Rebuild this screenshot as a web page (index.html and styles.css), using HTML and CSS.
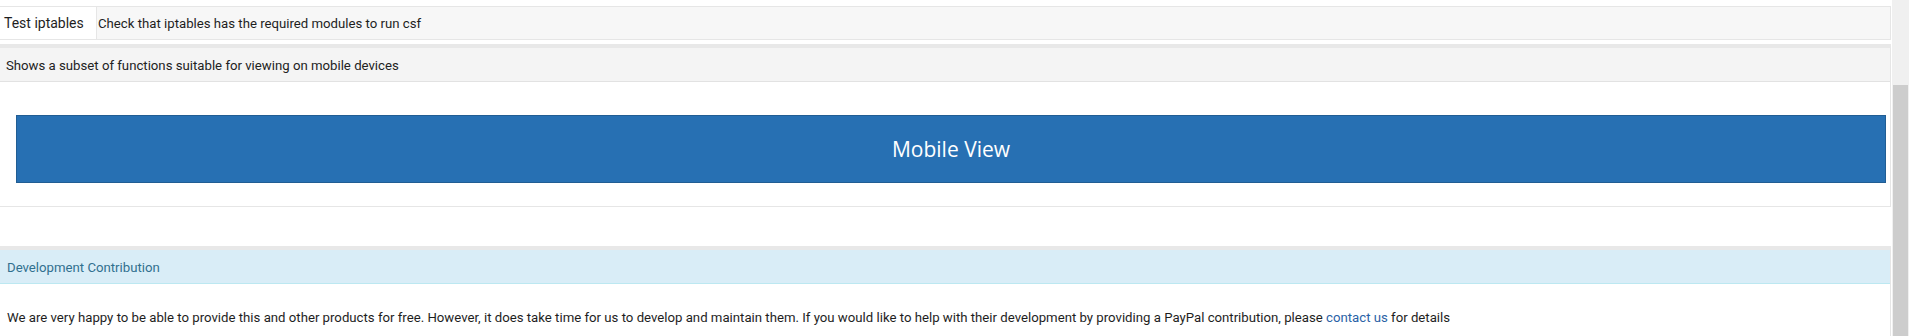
FILE: index.html
```html
<!DOCTYPE html>
<html lang="en">
<head>
<meta charset="utf-8">
<title>csf</title>
<link rel="stylesheet" href="styles.css">
</head>
<body>
<div class="page">
  <main class="content">
    <div class="top-space"></div>
    <div class="table-row">
      <div class="cell cell-action">Test iptables</div>
      <div class="cell cell-desc">Check that iptables has the required modules to run csf</div>
    </div>
    <section class="panel panel-default">
      <div class="panel-heading">Shows a subset of functions suitable for viewing on mobile devices</div>
      <div class="panel-body body-button">
        <button class="btn-mobile" type="button">Mobile View</button>
      </div>
    </section>
    <section class="panel panel-info">
      <div class="panel-heading">Development Contribution</div>
      <div class="panel-body body-text">We are very happy to be able to provide this and other products for free. However, it does take time for us to develop and maintain them. If you would like to help with their development by providing a PayPal contribution, please <a class="link" href="#">contact us</a> for details</div>
    </section>
  </main>
  <div class="scrollbar"><div class="thumb"></div></div>
</div>
</body>
</html>
```
FILE: styles.css
```css
html, body {
  margin: 0;
  padding: 0;
  background: #ffffff;
}
body {
  font-family: Roboto, "Liberation Sans", Arial, sans-serif;
  font-size: 13.2px;
  color: #222222;
  height: 336px;
  overflow: hidden;
}
.page {
  display: flex;
  height: 336px;
}
.content {
  width: 1891px;
  flex: none;
  display: flex;
  flex-direction: column;
}
.top-space {
  height: 6px;
}
.table-row {
  display: flex;
  height: 32px;
  border-top: 1px solid #e6e6e6;
  border-bottom: 1px solid #e6e6e6;
  border-right: 1px solid #e6e6e6;
  background: #f7f7f7;
}
.cell {
  display: flex;
  align-items: center;
}
.cell-action {
  width: 92px;
  padding-left: 4px;
  background: #ffffff;
  border-right: 1px solid #e6e6e6;
  font-size: 14px;
  color: #1e1e1e;
}
.cell-desc {
  padding-left: 1px;
  color: #1e1e1e;
}
.panel {
  border-top: 4px solid #e8e8e8;
  border-right: 1px solid #e6e6e6;
}
.panel-default {
  margin-top: 4px;
}
.panel-info {
  margin-top: 39px;
  flex: 1;
}
.panel-heading {
  height: 33px;
  line-height: 35px;
  padding-left: 6px;
}
.panel-default .panel-heading {
  background: #f4f4f4;
  border-bottom: 1px solid #e2e2e2;
}
.panel-info .panel-heading {
  background: #d9edf7;
  border-bottom: 1px solid #bce8f1;
  color: #31708f;
  padding-left: 7px;
}
.body-button {
  padding: 33px 4px 23px 16px;
  border-bottom: 1px solid #e6e6e6;
}
.btn-mobile {
  display: block;
  width: 100%;
  height: 68px;
  margin: 0;
  background: #2770b3;
  border: 1px solid #215d93;
  color: #ffffff;
  font-family: "Open Sans", "Liberation Sans", sans-serif;
  font-size: 21px;
  padding: 0;
  cursor: pointer;
}
.body-text {
  padding: 25px 0 0 7px;
  line-height: 18px;
  color: #1e1e1e;
}
.link {
  color: #2a62a6;
  text-decoration: none;
}
.scrollbar {
  margin-left: 1px;
  width: 17px;
  background: #f0f0f0;
  display: flex;
  flex-direction: column;
}
.thumb {
  margin: 85px 1px 0 1px;
  flex: 1;
  background: #cdcdcd;
}
```
